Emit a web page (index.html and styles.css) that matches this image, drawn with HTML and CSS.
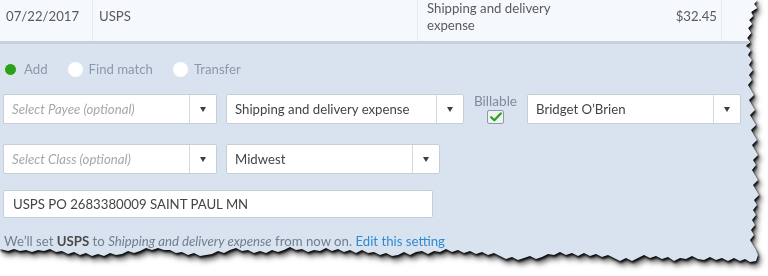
FILE: index.html
```html
<!DOCTYPE html>
<html>
<head>
<meta charset="utf-8">
<link rel="stylesheet" href="styles.css">
</head>
<body>
<div class="shadow">
  <div class="paper">
    <div class="txn-row">
      <div class="cell date">07/22/2017</div>
      <div class="cell payee">USPS</div>
      <div class="cell category">Shipping and delivery<br>expense</div>
      <div class="cell amount">$32.45</div>
      <div class="cell rest"></div>
    </div>
    <div class="panel">
      <div class="radios">
        <label class="radio"><span class="dot on"></span>Add</label>
        <label class="radio"><span class="dot"></span>Find match</label>
        <label class="radio"><span class="dot"></span>Transfer</label>
      </div>
      <div class="row">
        <div class="combo w214"><span class="val ph">Select Payee (optional)</span><span class="arrow"></span></div>
        <div class="combo w238"><span class="val">Shipping and delivery expense</span><span class="arrow"></span></div>
        <div class="billable"><span class="blabel">Billable</span><span class="check"><svg width="12" height="10" viewBox="0 0 12 10"><path d="M1.2 5.2 L4.3 8.2 L10.8 1.4" fill="none" stroke="#2ca01c" stroke-width="2.2" stroke-linecap="round" stroke-linejoin="round"/></svg></span></div>
        <div class="combo w214"><span class="val">Bridget O’Brien</span><span class="arrow"></span></div>
      </div>
      <div class="row row2">
        <div class="combo w214"><span class="val ph">Select Class (optional)</span><span class="arrow"></span></div>
        <div class="combo w214"><span class="val">Midwest</span><span class="arrow"></span></div>
      </div>
      <div class="memo">USPS PO 2683380009 SAINT PAUL MN</div>
      <p class="note">We’ll set <b>USPS</b> to <i>Shipping and delivery expense</i> from now on. <a href="#">Edit this setting</a></p>
    </div>
  </div>
</div>
</body>
</html>
```
FILE: styles.css
```css
* { box-sizing: border-box; }
html, body { margin: 0; padding: 0; background: #fff; }
body { width: 768px; height: 276px; overflow: hidden; font-family: Lato, "Open Sans", sans-serif; font-size: 13.2px; color: #4a4a4a; }

.shadow { filter: drop-shadow(1px 2px 0.8px rgba(0,0,0,0.95)) drop-shadow(2px 3px 2.5px rgba(0,0,0,0.6)); width: 768px; height: 276px; }
.paper {
  width: 768px; height: 276px; background: #d8e3ef;
  clip-path: polygon(0 0, 757px 0, 754px 4px, 757px 8px, 751px 12px, 753px 16px, 749px 20px, 752px 24px, 748px 28px, 751px 33px, 747px 38px, 750px 42px, 746px 46px, 751px 50px, 748px 55px, 752px 60px, 749px 65px, 753px 70px, 749px 75px, 752px 80px, 748px 85px, 751px 90px, 754px 95px, 749px 100px, 752px 105px, 755px 110px, 750px 115px, 753px 120px, 756px 125px, 751px 130px, 754px 135px, 757px 140px, 752px 145px, 755px 150px, 758px 155px, 753px 160px, 756px 165px, 752px 170px, 755px 175px, 758px 180px, 753px 185px, 756px 190px, 759px 195px, 754px 200px, 757px 205px, 753px 210px, 756px 215px, 752px 220px, 755px 225px, 751px 230px, 754px 235px, 750px 240px, 753px 245px, 756px 250px, 758px 255px, 756px 261px, 750px 262px, 745px 259px, 740px 261px, 734px 258px, 728px 261px, 722px 258px, 716px 260px, 710px 257px, 704px 260px, 698px 259px, 692px 256px, 686px 259px, 680px 258px, 674px 261px, 668px 257px, 662px 259px, 656px 256px, 650px 258px, 644px 255px, 638px 258px, 632px 261px, 626px 258px, 620px 261px, 614px 258px, 608px 255px, 602px 257px, 596px 254px, 590px 256px, 584px 253px, 578px 256px, 572px 253px, 566px 255px, 560px 252px, 554px 255px, 548px 254px, 542px 257px, 536px 259px, 530px 256px, 524px 258px, 518px 260px, 512px 257px, 506px 259px, 500px 256px, 494px 253px, 488px 255px, 482px 252px, 476px 254px, 470px 251px, 464px 253px, 458px 250px, 452px 252px, 446px 249px, 440px 252px, 434px 251px, 428px 254px, 422px 251px, 416px 252px, 410px 255px, 404px 252px, 398px 255px, 392px 256px, 386px 253px, 380px 255px, 374px 252px, 368px 253px, 362px 250px, 356px 253px, 350px 250px, 344px 252px, 338px 249px, 332px 251px, 326px 248px, 320px 251px, 314px 250px, 308px 252px, 302px 249px, 296px 250px, 290px 247px, 284px 250px, 278px 252px, 272px 250px, 266px 253px, 260px 251px, 254px 253px, 248px 250px, 242px 251px, 236px 248px, 230px 250px, 224px 253px, 218px 251px, 212px 254px, 206px 255px, 200px 256px, 194px 253px, 188px 255px, 182px 252px, 176px 253px, 170px 250px, 164px 250px, 158px 248px, 152px 250px, 146px 248px, 140px 251px, 134px 253px, 128px 251px, 122px 254px, 116px 255px, 110px 253px, 104px 256px, 98px 254px, 92px 256px, 86px 253px, 80px 255px, 74px 252px, 68px 254px, 62px 251px, 56px 252px, 50px 249px, 44px 251px, 38px 250px, 32px 252px, 26px 250px, 20px 251px, 14px 249px, 8px 251px, 0 249px);
}

.txn-row { display: flex; height: 44px; background: #f5f9fd; border-bottom: 3px solid #c7d1dc; color: #5a5a5a; }
.cell { display: flex; align-items: flex-start; line-height: 17px; padding-top: 8px; }
.date { width: 93px; padding-left: 6px; border-right: 1px solid #e6ecf2; }
.payee { width: 324px; padding-left: 6px; }
.category { width: 190px; padding-left: 9px; padding-top: 0; border-left: 1px solid #e6ecf2; display: block; }
.amount { width: 115px; justify-content: flex-end; padding-right: 4px; border-right: 1px solid #e6ecf2; }
.rest { flex: 1; }

.panel { padding: 15px 0 0 3px; }
.radios { display: flex; height: 20px; align-items: center; color: #8b99a9; }
.radio { display: flex; align-items: center; margin-right: 20px; }
.dot { width: 15px; height: 15px; border-radius: 50%; background: #fff; margin-right: 6px; }
.dot.on { width: 13px; height: 13px; background: #2ca01c; border: 1px solid #e6efe4; margin-left: 1px; margin-right: 7px; }

.row { display: flex; margin-top: 15px; height: 30px; gap: 9px; }
.row2 { margin-top: 20px; }
.combo { display: flex; height: 30px; background: #fff; border: 1px solid #c6cfd8; border-radius: 2px; }
.w214 { width: 214px; }
.w238 { width: 238px; }
.val { flex: 1; display: flex; align-items: center; padding-left: 8px; color: #444; white-space: nowrap; overflow: hidden; }
.val.ph { color: #a7a7a7; font-style: italic; }
.arrow { width: 27px; border-left: 1px solid #d2d9e0; display: flex; align-items: center; justify-content: center; }
.arrow::after { content: ""; border-left: 3.5px solid transparent; border-right: 3.5px solid transparent; border-top: 5px solid #3d3d3d; }

.billable { width: 45px; display: flex; flex-direction: column; align-items: center; margin-top: -1px; }
.blabel { color: #7e8c9a; line-height: 16px; font-size: 13.6px; }
.check { width: 17px; height: 17px; margin-top: 1px; border: 1px solid #8d9aa7; border-radius: 2px; background: #eef3ef; display: flex; align-items: center; justify-content: center; }

.memo { margin-top: 16px; width: 430px; height: 28px; background: #fff; border: 1px solid #c6cfd8; border-radius: 2px; padding-left: 9px; display: flex; align-items: center; color: #444; }
.note { margin: 14px 0 0 1px; line-height: 18px; color: #6f7f90; }
.note b { color: #4a4a4a; font-weight: 700; }
.note i { color: #6f7f90; }
.note a { color: #2f8ad4; text-decoration: none; }
```
